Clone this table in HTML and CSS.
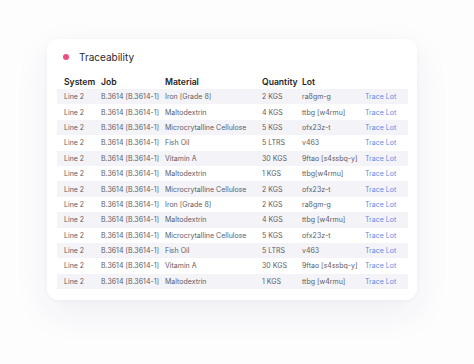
FILE: index.html
```html
<!DOCTYPE html>
<html>
<head>
<meta charset="utf-8">
<link rel="stylesheet" href="styles.css">
</head>
<body>
<div class="card">
  <div class="title"><span class="dot"></span><span>Traceability</span></div>
  <div class="table">
    <div class="row head">
      <div>System</div><div>Job</div><div>Material</div><div>Quantity</div><div>Lot</div><div></div>
    </div>
    <div class="row"><div>Line 2</div><div>B.3614 [B.3614-1]</div><div>Iron [Grade 8]</div><div>2 KGS</div><div>ra8gm-g</div><div class="link">Trace Lot</div></div>
    <div class="row"><div>Line 2</div><div>B.3614 [B.3614-1]</div><div>Maltodextrin</div><div>4 KGS</div><div>ttbg [w4rmu]</div><div class="link">Trace Lot</div></div>
    <div class="row"><div>Line 2</div><div>B.3614 [B.3614-1]</div><div>Microcrytalline Cellulose</div><div>5 KGS</div><div>ofx23z-t</div><div class="link">Trace Lot</div></div>
    <div class="row"><div>Line 2</div><div>B.3614 [B.3614-1]</div><div>Fish Oil</div><div>5 LTRS</div><div>v463</div><div class="link">Trace Lot</div></div>
    <div class="row"><div>Line 2</div><div>B.3614 [B.3614-1]</div><div>Vitamin A</div><div>30 KGS</div><div>9ftao [s4ssbq-y]</div><div class="link">Trace Lot</div></div>
    <div class="row"><div>Line 2</div><div>B.3614 [B.3614-1]</div><div>Maltodextrin</div><div>1 KGS</div><div>ttbg[w4rmu]</div><div class="link">Trace Lot</div></div>
    <div class="row"><div>Line 2</div><div>B.3614 [B.3614-1]</div><div>Microcrytalline Cellulose</div><div>2 KGS</div><div>ofx23z-t</div><div class="link">Trace Lot</div></div>
    <div class="row"><div>Line 2</div><div>B.3614 [B.3614-1]</div><div>Iron [Grade 8]</div><div>2 KGS</div><div>ra8gm-g</div><div class="link">Trace Lot</div></div>
    <div class="row"><div>Line 2</div><div>B.3614 [B.3614-1]</div><div>Maltodextrin</div><div>4 KGS</div><div>ttbg [w4rmu]</div><div class="link">Trace Lot</div></div>
    <div class="row"><div>Line 2</div><div>B.3614 [B.3614-1]</div><div>Microcrytalline Cellulose</div><div>5 KGS</div><div>ofx23z-t</div><div class="link">Trace Lot</div></div>
    <div class="row"><div>Line 2</div><div>B.3614 [B.3614-1]</div><div>Fish Oil</div><div>5 LTRS</div><div>v463</div><div class="link">Trace Lot</div></div>
    <div class="row"><div>Line 2</div><div>B.3614 [B.3614-1]</div><div>Vitamin A</div><div>30 KGS</div><div>9ftao [s4ssbq-y]</div><div class="link">Trace Lot</div></div>
    <div class="row"><div>Line 2</div><div>B.3614 [B.3614-1]</div><div>Maltodextrin</div><div>1 KGS</div><div>ttbg [w4rmu]</div><div class="link">Trace Lot</div></div>
  </div>
</div>
</body>
</html>
```
FILE: styles.css
```css
html, body {
  margin: 0;
  padding: 0;
}
body {
  background: #fdfdfe;
  width: 474px;
  height: 364px;
  overflow: hidden;
  font-family: Inter, "Noto Sans", sans-serif;
  padding-top: 39px;
  padding-left: 47px;
  box-sizing: border-box;
}
.card {
  width: 370px;
  height: 261px;
  box-sizing: border-box;
  background: #fff;
  border-radius: 11px;
  box-shadow: 0 12px 36px rgba(40, 40, 80, 0.07), 0 1px 4px rgba(40, 40, 80, 0.03);
  padding: 11px 9px 0 10px;
}
.title {
  display: flex;
  align-items: center;
  height: 14px;
  gap: 10px;
  padding-left: 6px;
  font-size: 10px;
  color: #2a2a30;
}
.dot {
  width: 6px;
  height: 6px;
  border-radius: 50%;
  background: #ec4f7e;
}
.table {
  margin-top: 10px;
}
.row {
  display: grid;
  grid-template-columns: 37px 64px 97px 40px 63px 1fr;
  height: 15.4px;
  align-items: center;
  font-size: 7px;
  color: #5c5c66;
}
.row > div {
  padding-left: 7px;
  white-space: nowrap;
}
.row:nth-child(even) {
  background: #f4f4f8;
}
.row.head {
  font-size: 8.6px;
  font-weight: 600;
  color: #1e1e24;
  height: 15px;
}
.link {
  color: #5a8de8;
}
```
